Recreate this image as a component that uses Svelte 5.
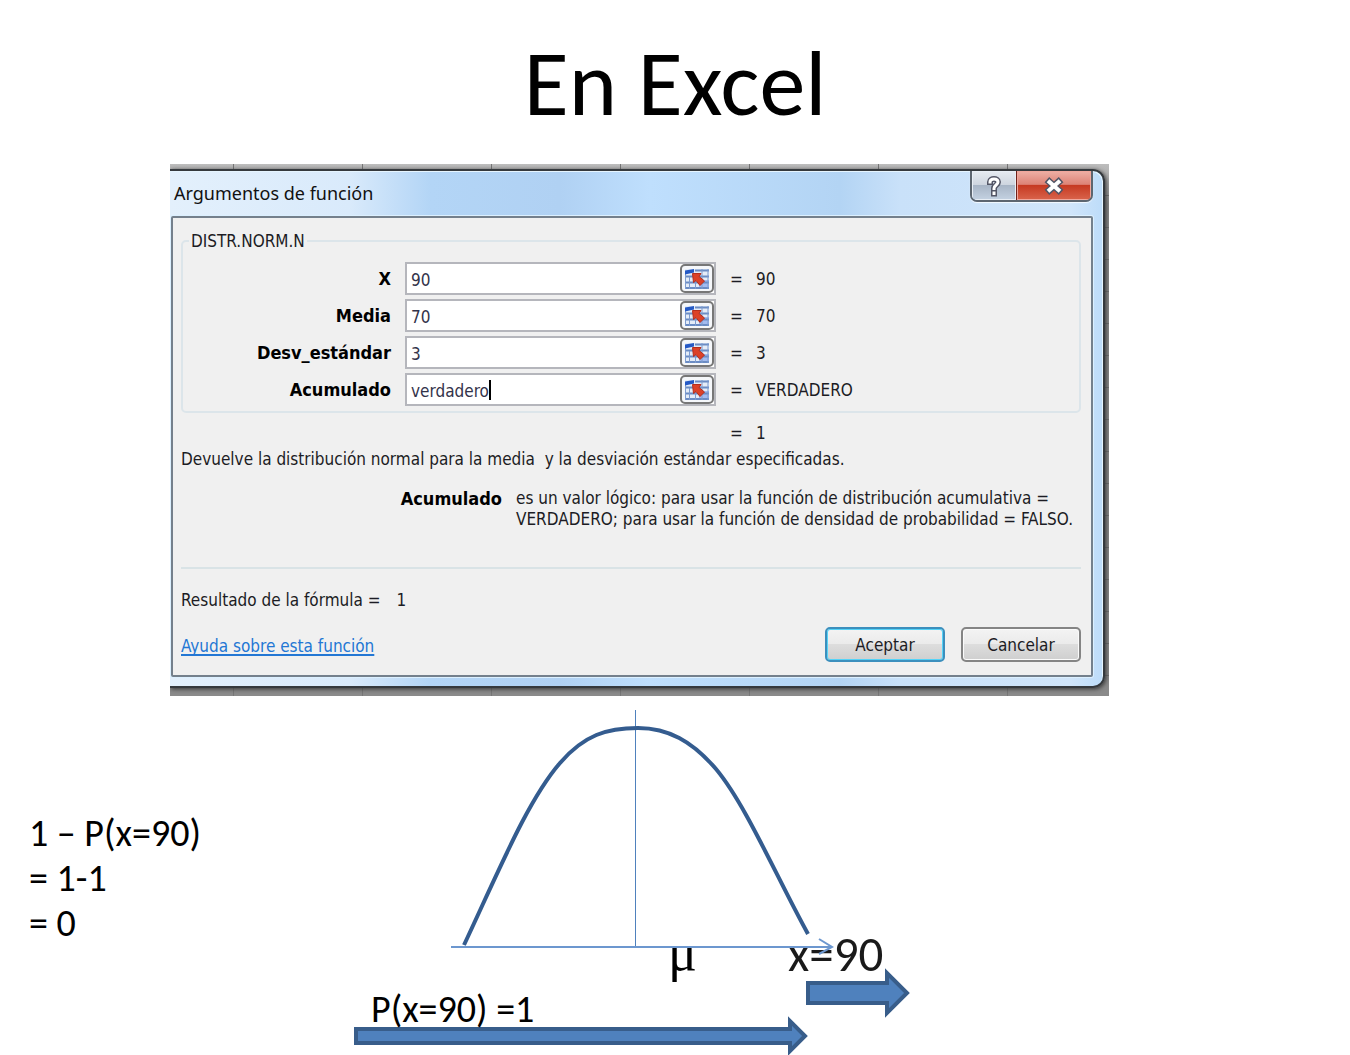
<script lang="ts">
  let args = $state([
    { id: 'x', label: 'X', value: '90', result: '90' },
    { id: 'media', label: 'Media', value: '70', result: '70' },
    { id: 'desv', label: 'Desv_estándar', value: '3', result: '3' },
    { id: 'acumulado', label: 'Acumulado', value: 'verdadero', result: 'VERDADERO', caret: true }
  ]);
</script>

<main class="slide">
  <h1>En Excel</h1>

  <div class="sheet">
    <section class="dialog" aria-labelledby="dialog-title">
      <header class="titlebar">
        <h2 id="dialog-title">Argumentos de función</h2>
        <div class="window-buttons">
          <button class="help" aria-label="Ayuda">
            <svg width="18" height="22" viewBox="0 0 18 22">
              <path class="outline" d="M5 7C5 3 13 3 13 7C13 10 9 10 9 13.500M9 18V18.500" />
              <path class="glyph" d="M5 7C5 3 13 3 13 7C13 10 9 10 9 13.500M9 18V18.500" />
            </svg>
          </button>
          <button class="close" aria-label="Cerrar">
            <svg width="20" height="18" viewBox="0 0 20 18">
              <path class="outline" d="M5.500 5L14.500 13M14.500 5L5.500 13" />
              <path class="glyph" d="M5.500 5L14.500 13M14.500 5L5.500 13" />
            </svg>
          </button>
        </div>
      </header>

      <div class="client">
        <fieldset>
          <legend>DISTR.NORM.N</legend>
          {#each args as arg (arg.id)}
            <div class="row">
              <label for={arg.id}>{arg.label}</label>
              <div class="field">
                <div class="entry">
                  <input id={arg.id} type="text" bind:value={arg.value} size={arg.caret ? 9 : 20} class:sized={arg.caret} />
                  {#if arg.caret}<span class="caret"></span>{/if}
                </div>
                <button class="picker" aria-label="Seleccionar rango para {arg.label}">
                  <svg width="26" height="22" viewBox="0 0 26 22">
                    <rect x="1" y="1" width="24" height="20" fill="#e4ecf8" />
                    <rect x="15" y="12" width="10" height="9" fill="#a3bbef" />
                    <path d="M11 2.500H25M1 8.500H25M1 14.500H25M1 20H25" stroke="#6b8cc4" stroke-width="2" />
                    <path d="M1.500 5V21M5.500 9V21M11.500 8V21M18 1V21M24 1V21" stroke="#7d9bcf" stroke-width="1" />
                    <path d="M1 2.500L10 1V4.500L1 6.500Z" fill="#2459c5" />
                    <path d="M8.500 5.500L17 5.500L15 8.500L20.500 13L16 17.500L12 12.500L9.500 14.500Z" fill="#dc4128" stroke="#b52d1c" />
                  </svg>
                </button>
              </div>
              <span>=</span>
              <output for={arg.id}>{arg.result}</output>
            </div>
          {/each}
        </fieldset>

        <div class="row total">
          <span class="eq">=</span>
          <output>1</output>
        </div>

        <p class="description">Devuelve la distribución normal para la media  y la desviación estándar especificadas.</p>

        <dl>
          <dt>Acumulado</dt>
          <dd>
            es un valor lógico: para usar la función de distribución acumulativa =<br />
            VERDADERO; para usar la función de densidad de probabilidad = FALSO.
          </dd>
        </dl>

        <hr />

        <p class="result"><span>Resultado de la fórmula =</span><output>1</output></p>

        <footer>
          <a href="#ayuda">Ayuda sobre esta función</a>
          <div class="actions">
            <button class="action default">Aceptar</button>
            <button class="action">Cancelar</button>
          </div>
        </footer>
      </div>
    </section>
  </div>

  <div class="lower">
    <p class="equations">
      1 – P(x=90)<br />
      = 1-1<br />
      = 0
    </p>

    <svg class="chart" width="570" height="359" viewBox="350 696 570 359" role="img" aria-label="Curva normal">
      <defs>
        <clipPath id="below-axis">
          <rect x="640" y="947" width="280" height="60" />
        </clipPath>
      </defs>
      <text class="mu" x="668" y="970" clip-path="url(#below-axis)">μ</text>
      <text class="x-label" x="788" y="971">x=90</text>
      <path class="axis thin" d="M635.500 710V947" />
      <path class="axis" d="M451 947H832M819 939L832 947L819 954" />
      <path class="curve" d="M464 945C500 868 528 800 560 763C584 735 607 728 638 728C668 728 692 741 716 769C746 805 776 876 808 934" />
      <path class="arrow" d="M808 983H887V973L907 993L887 1013V1003H808Z" />
      <path class="arrow" d="M356 1029H790V1021L805 1036L790 1051V1043H356Z" />
      <text class="p-label" x="371" y="1022">P(x=90) =1</text>
    </svg>
  </div>
</main>

<style>
  :global(body) {
    margin: 0;
    background: #ffffff;
  }

  .slide {
    font-family: Carlito, Lato, sans-serif;
    color: #000000;
  }

  h1 {
    margin: 0;
    padding: 34px 0 30px;
    font-size: 92px;
    line-height: 100px;
    font-weight: 400;
    text-align: center;
  }

  .sheet {
    margin: 0 241px 0 170px;
    padding: 5px 4px 8px 0;
    overflow: hidden;
    background:
      repeating-linear-gradient(90deg, transparent 0 63px, #777777 63px 64px, transparent 64px 129px),
      repeating-linear-gradient(180deg, transparent 0 31px, #707070 31px 32px),
      linear-gradient(180deg, #bdbdbd 0, #8a8a8a 40px, #8a8a8a 100%);
  }

  .dialog {
    box-sizing: border-box;
    border: 2px solid #35393d;
    border-left: none;
    border-radius: 0 12px 12px 0;
    padding: 0 10px 9px 1px;
    box-shadow: inset -1px 1px 0 #e6f5ff, 1px 1px 4px #333333;
    background:
      linear-gradient(90deg, #e3f0fc 0, #d9eafb 180px, #b3d5f6 260px, #b0d1f3 390px, #bfdffd 480px, #b3d4f4 670px, #c9e1f9 730px, #d0e5fa 900px, #bddcf9 100%);
    font-family: Tahoma, "DejaVu Sans Condensed", "Noto Sans", sans-serif;
    font-size: 17px;
    line-height: 20px;
    color: #1c1c24;
  }

  .titlebar {
    display: flex;
    justify-content: space-between;
    align-items: flex-start;
    height: 45px;
  }

  h2 {
    margin: 0;
    padding: 10px 0 0 3px;
    font-family: "Segoe UI", "Noto Sans", sans-serif;
    font-size: 18px;
    line-height: 24px;
    font-weight: 400;
    color: #111111;
  }

  button {
    padding: 0;
    font: inherit;
    color: inherit;
  }

  .window-buttons {
    display: flex;
    border: 2px solid #5d6670;
    border-top: none;
    border-radius: 0 0 7px 7px;
    overflow: hidden;
    box-shadow: 0 1px 1px #f4faff;
  }

  .help,
  .close {
    display: flex;
    align-items: center;
    justify-content: center;
    height: 29px;
    border: none;
  }

  .help {
    width: 44px;
    background: linear-gradient(180deg, #e6ebf1 0, #ced5df 48%, #a8b5c6 50%, #c4d2e2 100%);
    box-shadow: inset 0 0 0 1px #e8eef5;
  }

  .close {
    width: 75px;
    border-left: 1px solid #6f2119;
    background: linear-gradient(180deg, #eeb0a6 0, #dd8376 46%, #c63a22 50%, #d9644c 100%);
    box-shadow: inset 0 0 0 1px #f0a79c;
  }

  .outline,
  .glyph {
    fill: none;
    stroke-linecap: square;
  }

  .outline {
    stroke: #535666;
    stroke-width: 6;
  }

  .glyph {
    stroke: #ffffff;
    stroke-width: 3;
  }

  .close .outline {
    stroke-width: 7;
  }

  .close .glyph {
    stroke-width: 4;
  }

  .client {
    padding: 13px 10px 13px 8px;
    border: 2px solid #74808c;
    border-radius: 2px;
    background: #f0f0f0;
    box-shadow: 0 0 0 1px #dcf0ff;
  }

  fieldset {
    display: flex;
    flex-direction: column;
    gap: 4px;
    min-width: 0;
    margin: 0;
    padding: 11px 0 5px;
    border: 2px solid #dce5ea;
    border-radius: 5px;
  }

  legend {
    margin-left: 6px;
    padding: 0 2px;
  }

  .row {
    display: grid;
    grid-template-columns: 208px 311px 12px 1fr;
    column-gap: 14px;
    align-items: center;
  }

  label,
  dt {
    font-size: 18px;
    font-weight: 700;
    text-align: right;
    color: #000000;
  }

  .field {
    display: flex;
    box-sizing: border-box;
    height: 33px;
    border: 2px solid #b5b6bc;
    background: #ffffff;
  }

  .entry {
    display: flex;
    flex: 1;
    align-items: center;
    min-width: 0;
    padding-left: 4px;
  }

  input {
    width: 100%;
    min-width: 0;
    padding: 2px 0 0;
    border: none;
    outline: none;
    background: transparent;
    font: inherit;
    color: #33334a;
  }

  .sized {
    width: auto;
    field-sizing: content;
  }

  .caret {
    width: 2px;
    height: 20px;
    background: #000000;
  }

  .picker {
    display: flex;
    align-items: center;
    justify-content: center;
    width: 34px;
    border: 2px solid #777777;
    border-radius: 5px;
    background: #f5f7fa;
  }

  .total {
    margin-top: 10px;
    padding-left: 2px;
  }

  .eq {
    grid-column: 3;
  }

  p {
    margin: 0;
  }

  .description {
    margin-top: 6px;
    white-space: pre;
  }

  dl {
    display: grid;
    grid-template-columns: 321px 1fr;
    column-gap: 14px;
    margin: 19px 0 0;
    line-height: 21px;
  }

  dd {
    margin: 0;
    white-space: nowrap;
  }

  hr {
    height: 2px;
    margin: 37px 0 21px;
    border: none;
    background: #d9e3e6;
  }

  .result {
    display: flex;
    gap: 16px;
  }

  footer {
    display: flex;
    justify-content: space-between;
    align-items: flex-end;
    margin-top: 17px;
  }

  a {
    padding-bottom: 6px;
    color: #2377d4;
    text-decoration-thickness: 2px;
    text-underline-offset: 2px;
    text-decoration-skip-ink: none;
  }

  .actions {
    display: flex;
    gap: 16px;
  }

  .action {
    width: 120px;
    height: 35px;
    border: 2px solid #858585;
    border-radius: 5px;
    background: linear-gradient(180deg, #f3f3f3 0, #ebebeb 48%, #dddddd 50%, #cfcfcf 100%);
    box-shadow: inset 0 0 0 1px #fbfbfb;
  }

  .default {
    border-color: #3c8fbd;
    box-shadow: inset 0 0 0 1px #55d3f7;
  }

  .lower {
    display: flex;
  }

  .equations {
    box-sizing: border-box;
    width: 350px;
    padding: 115px 0 0 29px;
    font-size: 38px;
    line-height: 45px;
  }

  .chart {
    display: block;
  }

  .mu {
    font-family: "Liberation Serif", serif;
    font-size: 54px;
  }

  .x-label {
    font-size: 49px;
    fill: #1a1a1a;
  }

  .p-label {
    font-size: 38px;
  }

  .axis {
    fill: none;
    stroke: #6c97cf;
    stroke-width: 2;
  }

  .thin {
    stroke-width: 1;
    stroke: #4f81bd;
  }

  .curve {
    fill: none;
    stroke: #345c8f;
    stroke-width: 4;
  }

  .arrow {
    fill: #4f81bd;
    stroke: #385d8a;
    stroke-width: 4;
  }
</style>
